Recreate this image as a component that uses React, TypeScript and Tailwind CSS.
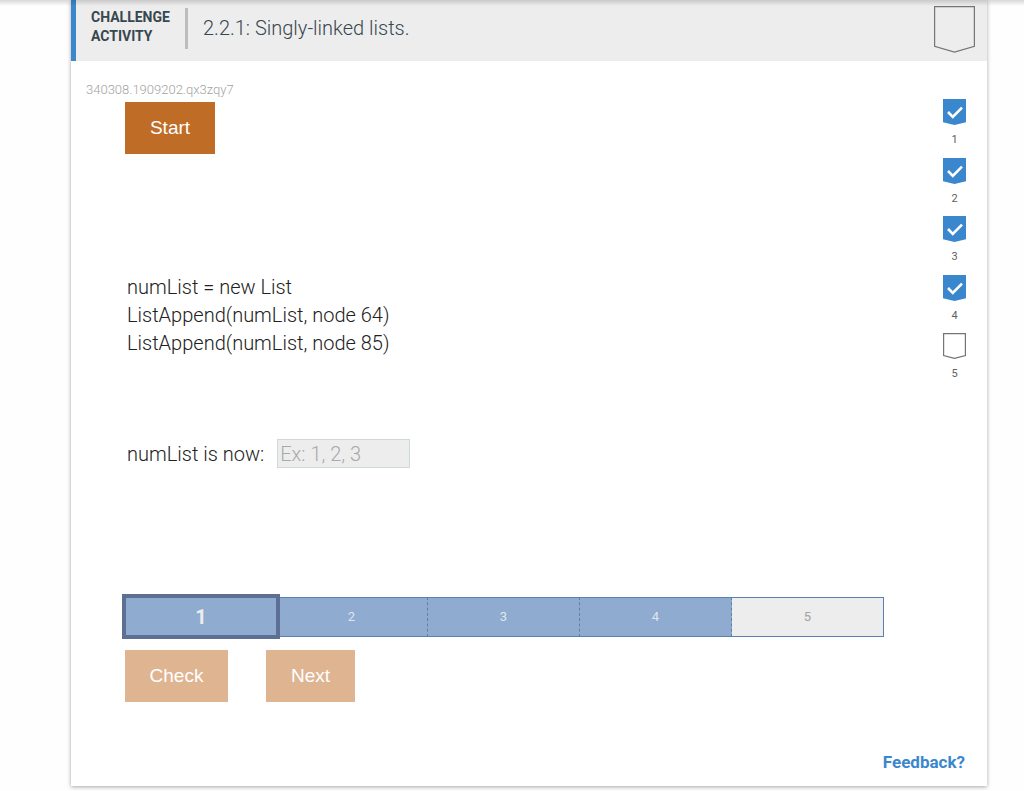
import { useState } from "react";

const STEPS = [
  { id: 1, done: true },
  { id: 2, done: true },
  { id: 3, done: true },
  { id: 4, done: true },
  { id: 5, done: false },
];

const CODE_LINES = [
  "numList = new List",
  "ListAppend(numList, node 64)",
  "ListAppend(numList, node 85)",
];

function Chevron({ done }: { done: boolean }) {
  return (
    <svg width="23" height="26" viewBox="0 0 23 26" aria-hidden="true" className="block">
      {done ? (
        <>
          <path d="M0 0H23V23.2L11.5 26L0 23.2Z" fill="#3b87cd" />
          <path d="M5 13L9.8 17.8L19 8.6" fill="none" stroke="#fff" strokeWidth="2.6" />
        </>
      ) : (
        <path d="M0.6 0.6H22.4V22.6L11.5 25.4L0.6 22.6Z" fill="#fff" stroke="#757575" strokeWidth="1.2" />
      )}
    </svg>
  );
}

/** Large outline badge shown at the right end of the activity header. */
function HeaderBadge() {
  return (
    <svg width="41" height="48" viewBox="0 0 41 48" aria-hidden="true" className="block">
      <path d="M0.6 0.6H40.4V40.4L20.5 46.2L0.6 40.4Z" fill="none" stroke="#757575" strokeWidth="1.2" />
    </svg>
  );
}

function ActivityHeader() {
  return (
    <header className="flex h-[61px] items-start border-l-[5px] border-[#3b87cd] bg-[#ededed] pr-3 pl-[15px] text-[#37474f]">
      <h2 className="w-[94px] pt-2 text-sm leading-[19px] font-bold uppercase">
        Challenge activity
      </h2>
      <div className="mt-2 h-[41px] w-[3px] bg-[#bdbdbd]" />
      <h1 className="ml-[15px] flex-1 pt-[14px] text-xl leading-7 font-light">
        2.2.1: Singly-linked lists.
      </h1>
      <div className="mt-[6px]">
        <HeaderBadge />
      </div>
    </header>
  );
}

function StepList() {
  return (
    <ol className="mt-[38px] flex h-[282px] flex-col justify-between">
      {STEPS.map((step) => (
        <li key={step.id} className="flex flex-col items-center">
          <Chevron done={step.done} />
          <span className="mt-2 text-[11px] leading-[14px] text-[#616161]">{step.id}</span>
        </li>
      ))}
    </ol>
  );
}

function ProgressBar() {
  return (
    <div className="flex items-center text-[13px]">
      {/* the current level is framed and overlaps the next cell */}
      <div className="relative -mr-1 flex h-[45px] w-[158px] items-center justify-center border-4 border-[#5d7093] bg-[#8fabd0] text-xl font-bold text-[#ededed]">
        1
      </div>
      {STEPS.slice(1).map((step) =>
        step.done ? (
          <div
            key={step.id}
            className="flex h-10 flex-1 items-center justify-center border-y border-r border-[#5b7fae] bg-[#8fabd0] text-[#dfe6ef] [border-right-style:dashed]"
          >
            {step.id}
          </div>
        ) : (
          <div
            key={step.id}
            className="flex h-10 flex-1 items-center justify-center border-y border-r border-[#5b7fae] bg-[#ededed] text-[#a3a3a3]"
          >
            {step.id}
          </div>
        )
      )}
    </div>
  );
}

export default function App() {
  const [answer, setAnswer] = useState("");

  return (
    <div className="relative min-h-screen bg-[#fefefe] pr-[37px] pb-[5px] pl-[71px] font-['Roboto','Liberation_Sans',sans-serif]">
      <section className="bg-white shadow-[0_1px_4px_rgba(0,0,0,0.35)]">
        <ActivityHeader />
        <div className="flex items-start gap-[59px] pr-[21px]">
          <div className="min-w-0 flex-1 pl-[51px]">
            <p className="-ml-9 pt-5 text-[13px] leading-[18px] font-light text-[#a3a3a3]">
              340308.1909202.qx3zqy7
            </p>
            <button
              type="button"
              className="mt-[3px] ml-[3px] block h-[52px] w-[90px] bg-[#bf6c27] font-['Liberation_Sans',sans-serif] text-[19px] text-white"
            >
              Start
            </button>

            <div className="mt-[119px] ml-[5px] text-xl leading-7 font-light text-[#212121]">
              {CODE_LINES.map((line) => (
                <p key={line}>{line}</p>
              ))}
            </div>

            <div className="mt-[82px] ml-[5px] flex items-center text-xl font-light text-[#212121]">
              <label htmlFor="answer">numList is now:</label>
              <input
                id="answer"
                type="text"
                placeholder="Ex: 1, 2, 3"
                value={answer}
                onChange={(e) => setAnswer(e.target.value)}
                className="ml-[13px] h-[29px] w-[133px] border border-[#cfd8dc] bg-[#ededed] px-[2px] placeholder:text-[#a9a9a9]"
              />
            </div>

            <div className="mt-[126px]">
              <ProgressBar />
            </div>

            <div className="mt-[11px] ml-[3px] flex gap-[38px] font-['Liberation_Sans',sans-serif] text-[19px] text-white">
              <button type="button" disabled className="h-[52px] w-[103px] bg-[#dfb491]">
                Check
              </button>
              <button type="button" disabled className="h-[52px] w-[89px] bg-[#dfb491]">
                Next
              </button>
            </div>
          </div>
          <StepList />
        </div>
        <div className="flex justify-end pt-12 pr-[22px] pb-3">
          <a href="#feedback" className="text-[17px] leading-6 font-bold text-[#3b87cd]">
            Feedback?
          </a>
        </div>
      </section>
      <div className="pointer-events-none absolute inset-x-0 top-0 h-[6px] bg-gradient-to-b from-black/15 to-transparent" />
    </div>
  );
}
